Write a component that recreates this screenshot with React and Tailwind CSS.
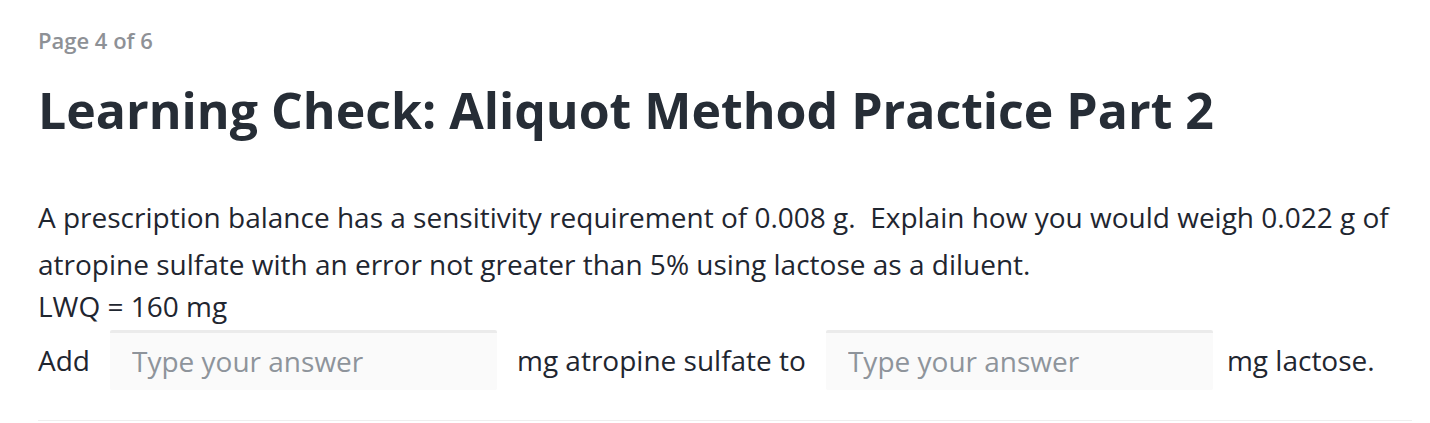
export default function App() {
  return (
    <div className="bg-white w-[1430px] h-[423px] overflow-hidden" style={{ fontFamily: '"Open Sans", sans-serif' }}>
      <div className="pl-[38px] pr-[18px]">
        <div className="pt-[25px] text-[22px] font-semibold text-[#8e9196] leading-[30px]">Page 4 of 6</div>
        <h1 className="mt-[23px] text-[50px] font-bold text-[#262d36] leading-[64px]">
          Learning Check: Aliquot Method Practice Part 2
        </h1>
        <div className="mt-[52px] text-[28px] text-[#1f2630]">
          <p className="leading-[47px]">
            A prescription balance has a sensitivity requirement of 0.008 g.&nbsp; Explain how you would weigh 0.022 g of atropine sulfate with an error not greater than 5% using lactose as a diluent.
          </p>
          <p className="leading-[37px]">LWQ = 160 mg</p>
          <div className="flex items-center gap-[20px] mt-[4.5px] pb-[30px] border-b border-[#eeeeee]">
            <span>Add</span>
            <input
              type="text"
              placeholder="Type your answer"
              className="w-[387px] h-[60px] bg-[#fafafa] border-t-[3px] border-[#ebebeb] rounded-[2px] px-[22px] text-[28px] placeholder-[#8e949b] outline-none"
            />
            <span>mg atropine sulfate to</span>
            <input
              type="text"
              placeholder="Type your answer"
              className="w-[387px] h-[60px] bg-[#fafafa] border-t-[3px] border-[#ebebeb] rounded-[2px] px-[22px] text-[28px] placeholder-[#8e949b] outline-none"
            />
            <span className="-ml-[6px]">mg lactose.</span>
          </div>
        </div>
      </div>
    </div>
  );
}
